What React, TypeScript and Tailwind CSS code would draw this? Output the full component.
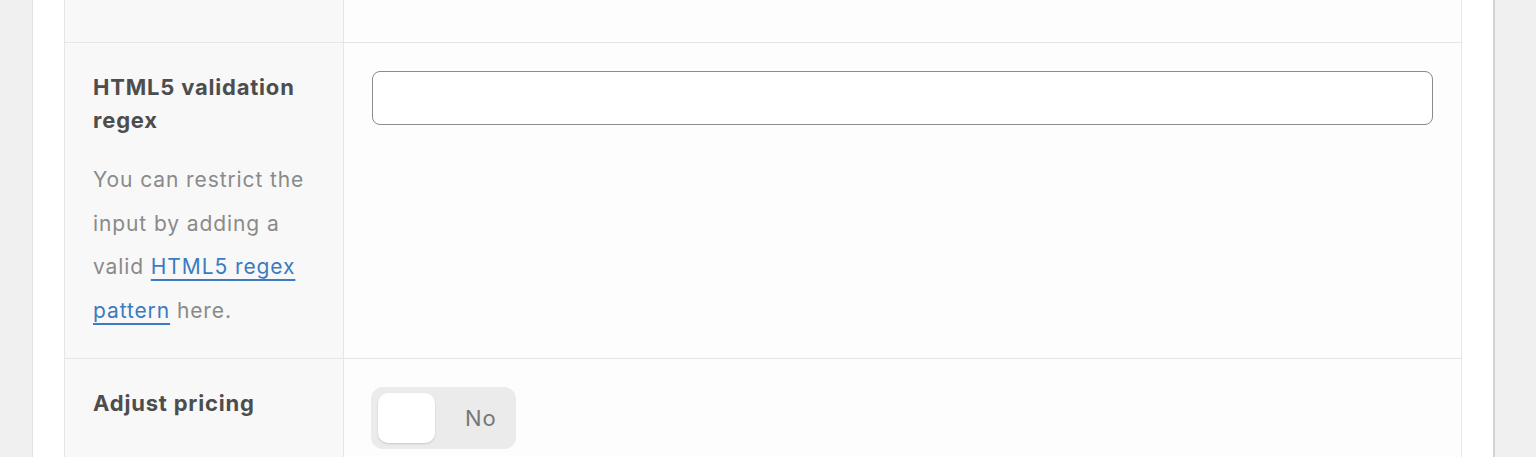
const font = { fontFamily: "Inter, 'Liberation Sans', sans-serif" };

function LabelCell({ title, children }: { title: string; children?: React.ReactNode }) {
  return (
    <div className="w-[279px] shrink-0 border-r border-[#e6e6e6] bg-[#f8f8f8] px-[28px] pt-[28px] pb-[26px]">
      <div className="text-[22px] font-bold leading-[33px] tracking-[0.8px] text-[#4d4d4d]">{title}</div>
      {children}
    </div>
  );
}

export default function App() {
  return (
    <div className="flex h-[457px] w-full overflow-hidden bg-[#f0f0f1]" style={font}>
      <div className="w-[33px] shrink-0 border-r border-[#e2e2e2] bg-[#f0f0f1]" />
      <div className="flex-1 bg-white px-[31px]">
        <div className="flex h-full flex-col border-x border-[#e6e6e6]">
          <div className="flex h-[43px] shrink-0 border-b border-[#e6e6e6]">
            <div className="w-[279px] shrink-0 border-r border-[#e6e6e6] bg-[#f8f8f8]" />
            <div className="flex-1 bg-[#fdfdfd]" />
          </div>

          <div className="flex h-[316px] shrink-0 border-b border-[#e6e6e6]">
            <LabelCell title="HTML5 validation regex">
              <p className="mt-[21px] text-[21px] leading-[43.5px] tracking-[0.9px] text-[#8a8a8a]">
                You can restrict the input by adding a valid{" "}
                <a
                  href="#"
                  className="text-[#3b7bc2] underline decoration-[1.5px] underline-offset-[5px]"
                >
                  HTML5 regex pattern
                </a>{" "}
                here.
              </p>
            </LabelCell>
            <div className="flex-1 bg-[#fdfdfd] px-[28px] pt-[28px]">
              <input
                type="text"
                className="h-[54px] w-full rounded-[8px] border-[1.5px] border-[#8a8b8f] bg-white px-3 outline-none"
              />
            </div>
          </div>

          <div className="flex flex-1">
            <LabelCell title="Adjust pricing" />
            <div className="flex-1 bg-[#fdfdfd] px-[27px] pt-[28px]">
              <div className="flex h-[62px] w-[145px] items-center rounded-[12px] bg-[#ebebeb] pl-[7px]">
                <div className="h-[50px] w-[57px] rounded-[10px] bg-white shadow-[0_1px_2px_rgba(0,0,0,0.15)]" />
                <span className="ml-[30px] text-[22px] tracking-[0.8px] text-[#777777]">No</span>
              </div>
            </div>
          </div>
        </div>
      </div>
      <div className="w-[43px] shrink-0 border-l-2 border-[#d4d4d6] bg-[#f0f0f1]" />
    </div>
  );
}
